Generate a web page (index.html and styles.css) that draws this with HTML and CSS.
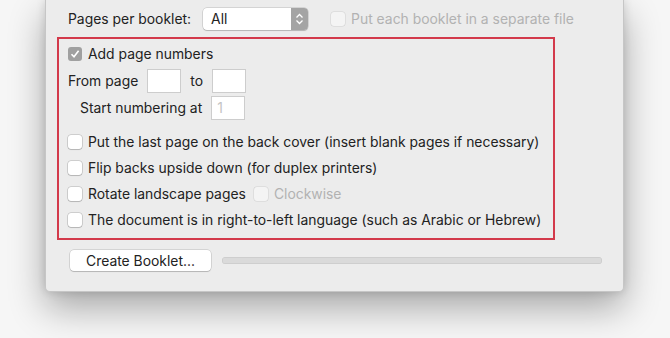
FILE: index.html
```html
<!DOCTYPE html>
<html lang="en">
<head>
  <meta charset="UTF-8" />
  <title>Create Booklet</title>
  <link rel="stylesheet" href="styles.css">
</head>
<body>

<div class="window">
  <div class="row top-row">
    <span class="label">Pages per booklet:</span>
    <div class="select">
      <span class="select-value">All</span>
      <span class="stepper">
        <svg width="9" height="12" viewBox="0 0 9 12"><path d="M1.5 4.5 L4.5 1.5 L7.5 4.5 M1.5 7.5 L4.5 10.5 L7.5 7.5" fill="none" stroke="#fff" stroke-width="1.3"/></svg>
      </span>
    </div>
    <label class="check disabled separate">
      <span class="box"></span>
      <span>Put each booklet in a separate file</span>
    </label>
  </div>

  <div class="options">
    <label class="check row tall">
      <span class="box checked">
        <svg width="10" height="10" viewBox="0 0 10 10"><path d="M1.5 5.2 L4 7.8 L8.6 1.8" fill="none" stroke="#fff" stroke-width="1.6"/></svg>
      </span>
      <span>Add page numbers</span>
    </label>
    <div class="row tall">
      <span class="label">From page</span>
      <span class="field from"></span>
      <span class="label to">to</span>
      <span class="field"></span>
    </div>
    <div class="row tall indent">
      <span class="label">Start numbering at</span>
      <span class="field start">1</span>
    </div>

    <label class="check row gap">
      <span class="box"></span>
      <span>Put the last page on the back cover (insert blank pages if necessary)</span>
    </label>
    <label class="check row">
      <span class="box"></span>
      <span>Flip backs upside down (for duplex printers)</span>
    </label>
    <div class="row">
      <label class="check">
        <span class="box"></span>
        <span>Rotate landscape pages</span>
      </label>
      <label class="check disabled clockwise">
        <span class="box"></span>
        <span>Clockwise</span>
      </label>
    </div>
    <label class="check row">
      <span class="box"></span>
      <span>The document is in right-to-left language (such as Arabic or Hebrew)</span>
    </label>
  </div>

  <div class="bottom-row">
    <button class="button">Create Booklet...</button>
    <div class="progress"></div>
  </div>
</div>

</body>
</html>
```

FILE: styles.css
```css
* {
  box-sizing: border-box;
}

body {
  margin: 0;
  height: 338px;
  overflow: hidden;
  background-color: #f6f6f6;
  font-family: 'Inter', 'Liberation Sans', sans-serif;
  font-size: 13.9px;
  color: #222;
}

.window {
  margin-left: 45px;
  width: 579px;
  height: 292px;
  padding: 6px 0 0 0;
  background-color: #ececec;
  border: 1px solid #c6c6c6;
  border-top: none;
  border-radius: 0 0 5px 5px;
  box-shadow: 0 16px 36px rgba(0, 0, 0, 0.32), 0 0 10px rgba(0, 0, 0, 0.14);
}

.row {
  display: flex;
  align-items: center;
  height: 26px;
}

.row.tall {
  height: 27px;
}

.top-row {
  padding-left: 22px;
}

.label {
  white-space: nowrap;
}

.select {
  display: flex;
  align-items: center;
  margin-left: 12px;
  width: 105px;
  height: 22px;
  background-color: #fff;
  border-radius: 4px;
  box-shadow: 0 0 0 0.5px rgba(0, 0, 0, 0.2), 0 1px 1px rgba(0, 0, 0, 0.15);
  overflow: hidden;
}

.select-value {
  flex: 1;
  padding-left: 8px;
}

.stepper {
  display: flex;
  align-items: center;
  justify-content: center;
  width: 17px;
  height: 100%;
  background-color: #a4a4a4;
}

.check {
  display: flex;
  align-items: center;
  white-space: nowrap;
}

.box {
  display: flex;
  align-items: center;
  justify-content: center;
  width: 14px;
  height: 14px;
  margin-right: 6px;
  background-color: #fff;
  border-radius: 3px;
  box-shadow: 0 0 0 0.5px rgba(0, 0, 0, 0.25), 0 1px 1px rgba(0, 0, 0, 0.12);
}

.box.checked {
  background-color: #a0a0a0;
  box-shadow: none;
}

.disabled {
  color: #b2b2b2;
}

.disabled .box {
  background-color: #f4f4f4;
  box-shadow: 0 0 0 0.5px rgba(0, 0, 0, 0.12);
}

.separate {
  margin-left: 23px;
}

.options {
  margin: 5px 0 0 11px;
  width: 498px;
  height: 203px;
  padding: 1px 9px 0 9px;
  border: 2px solid #d33a4b;
}

.field {
  width: 32px;
  height: 22px;
  background-color: #fff;
  box-shadow: 0 0 0 1px #cdcdcd;
  padding: 3px 0 0 5px;
  color: #c4c4c4;
}

.from {
  margin-left: 10px;
}

.to {
  margin: 0 10px;
}

.indent {
  padding-left: 12px;
}

.start {
  margin-left: 10px;
}

.gap {
  margin-top: 8px;
}

.clockwise {
  margin-left: 8px;
}

.bottom-row {
  display: flex;
  align-items: center;
  margin-top: 10px;
  padding-left: 24px;
}

.button {
  width: 141px;
  height: 21px;
  padding: 0;
  border: none;
  border-radius: 4px;
  background-color: #fff;
  box-shadow: 0 0 0 0.5px rgba(0, 0, 0, 0.2), 0 1px 1px rgba(0, 0, 0, 0.15);
  font-family: inherit;
  font-size: inherit;
  color: #222;
}

.progress {
  margin-left: 11px;
  width: 380px;
  height: 7px;
  border-radius: 4px;
  background-color: #dadada;
  box-shadow: inset 0 0 0 0.5px rgba(0, 0, 0, 0.1);
}
```
